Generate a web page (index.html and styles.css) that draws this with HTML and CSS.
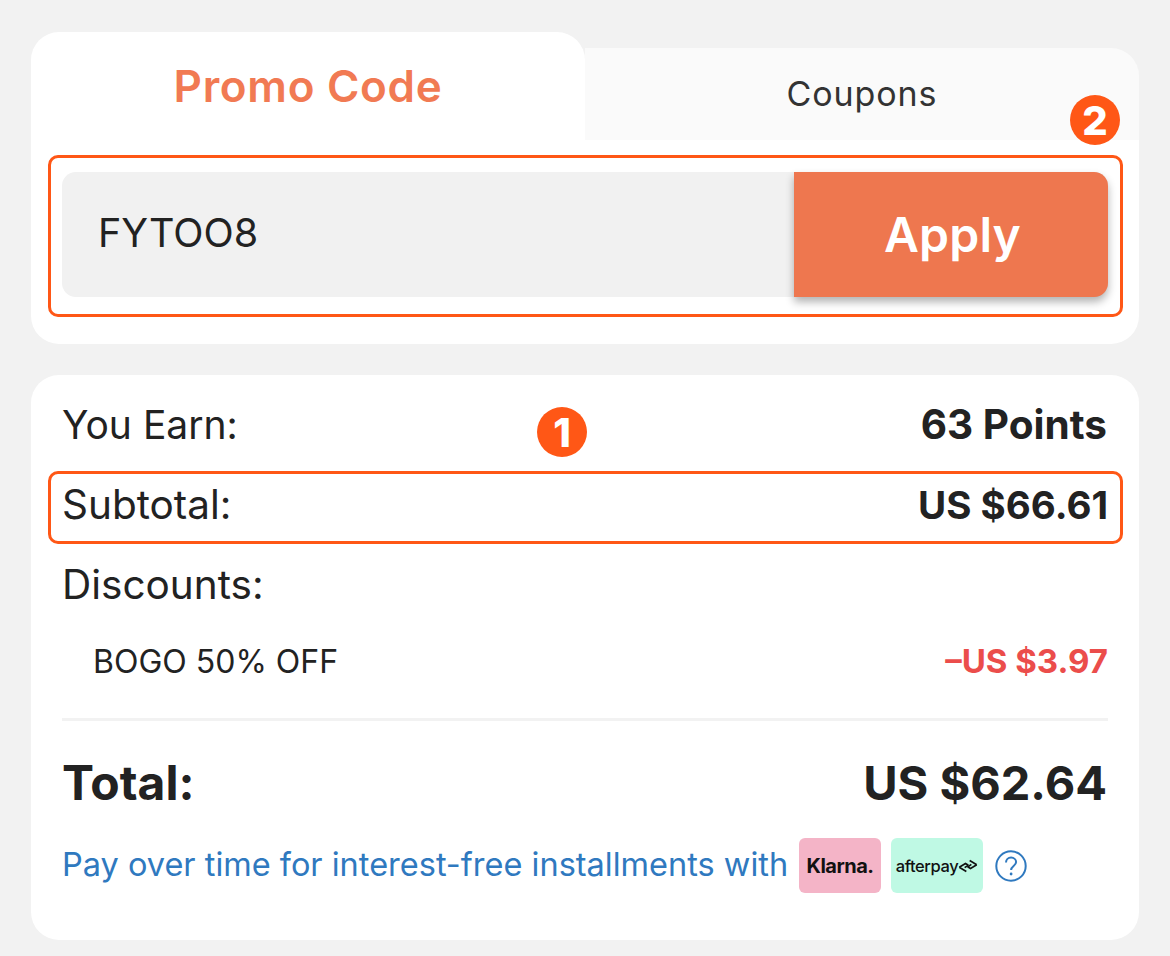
FILE: index.html
```html
<!DOCTYPE html>
<html lang="en">
<head>
<meta charset="utf-8">
<title>Checkout summary</title>
<link rel="stylesheet" href="styles.css">
</head>
<body>
<main class="page">
  <section class="card promo">
    <div class="tabs">
      <div class="tab tab-active">Promo Code</div>
      <div class="tab tab-idle">Coupons</div>
    </div>
    <span class="badge badge-two">2</span>
    <div class="promo-body">
      <div class="outline outline-promo">
        <div class="code-field">
          <span class="code-value">FYTOO8</span>
          <button class="apply" type="button">Apply</button>
        </div>
      </div>
    </div>
  </section>
  <section class="card summary">
    <span class="badge badge-one">1</span>
    <div class="row row-earn"><span>You Earn:</span><strong class="points">63 Points</strong></div>
    <div class="outline outline-sub">
      <div class="row row-sub"><span>Subtotal:</span><strong>US $66.61</strong></div>
    </div>
    <div class="row row-disc"><span>Discounts:</span></div>
    <div class="row row-bogo"><span>BOGO 50% OFF</span><strong class="minus">–US $3.97</strong></div>
    <div class="divider"></div>
    <div class="row row-total"><strong class="total-label">Total:</strong><strong>US $62.64</strong></div>
    <div class="pay">
      <span class="pay-text">Pay over time for interest-free installments with</span>
      <span class="logo logo-klarna">Klarna.</span>
      <span class="logo logo-afterpay">afterpay<svg class="ap-mark" viewBox="0 0 24 16" aria-hidden="true"><path d="M1.500 9.500 9 5l3.500 2M22.500 6.500 15 11l-3.500-2M14 1.500l8.500 5M10 14.500l-8.500-5M8 10l4.500-3M12 9l4-3" fill="none" stroke="#111" stroke-width="2"/></svg></span>
      <svg class="help" viewBox="0 0 32 32" aria-hidden="true"><circle cx="16" cy="16" r="14.700" fill="none" stroke="#2f79bf" stroke-width="2"/><path d="M11 12.600c0-3 2.200-5 5.100-5 2.800 0 5 1.900 5 4.500 0 3.900-5 4-5 7.900" fill="none" stroke="#2f79bf" stroke-width="2"/><circle cx="16.100" cy="24" r="1.400" fill="#2f79bf"/></svg>
    </div>
  </section>
</main>
</body>
</html>
```
FILE: styles.css
```css
* { box-sizing: border-box; }
html, body { margin: 0; height: 100%; }
body {
  background: #f2f2f2;
  font-family: "Inter", "Open Sans", sans-serif;
  color: #222;
  overflow: hidden;
}
.page {
  padding: 32px 31px 0;
  display: flex;
  flex-direction: column;
  gap: 31px;
}
.card {
  position: relative;
  background: #fff;
  border-radius: 28px;
}
.promo {
  height: 312px;
  background: transparent;
  display: flex;
  flex-direction: column;
}
.tabs { display: flex; height: 108px; align-items: flex-end; }
.tab { width: 554px; display: flex; justify-content: center; align-items: center; }
.tab-active {
  height: 108px;
  background: #fff;
  border-radius: 28px 28px 0 0;
  color: #f17a53;
  font-size: 44px;
  font-weight: 600;
  letter-spacing: 0.7px;
}
.tab-idle {
  height: 92px;
  background: #fafafa;
  border-radius: 0 28px 0 0;
  color: #333;
  font-size: 34px;
  letter-spacing: 0.9px;
  padding: 0 0 2px;
}
.promo-body {
  flex: 1;
  background: #fff;
  border-radius: 0 0 28px 28px;
  padding: 15px 16px 0 17px;
}
.outline {
  border: 3px solid #ff5716;
  border-radius: 10px;
}
.outline-promo { height: 162px; padding: 14px 12px 17px 11px; }
.code-field {
  height: 125px;
  display: flex;
  justify-content: space-between;
  align-items: stretch;
  background: #f1f1f1;
  border-radius: 14px;
}
.code-value {
  font-size: 39.500px;
  padding-left: 36px;
  align-self: center;
  padding-bottom: 4px;
}
.apply {
  width: 314px;
  border: 0;
  border-radius: 0 14px 14px 0;
  background: #ee774f;
  color: #fff;
  font: 600 48px "Inter", sans-serif;
  letter-spacing: 0.2px;
  padding: 0 0 0 3px;
  box-shadow: 0 5px 8px rgba(0, 0, 0, 0.3);
}
.summary { height: 565px; padding: 16px 31px 0; }
.row {
  display: flex;
  justify-content: space-between;
  align-items: center;
  font-size: 39px;
}
.row strong { font-weight: 700; font-size: 38.500px; }
.row-earn { height: 66px; }
.row strong.points { font-size: 40.500px; padding-right: 1px; }
.outline-sub { height: 73px; margin: 14px -15px 0 -14px; padding: 0 12px 0 11px; }
.row-sub { height: 61px; font-size: 40.500px; }
.row-disc { height: 68px; margin-top: 6px; font-size: 40.500px; }
.row-bogo { height: 76px; font-size: 32px; padding-left: 31px; margin-top: 5px; }
.row strong.minus { color: #eb4d4b; font-size: 33px; }
.divider { height: 3px; background: #f2f2f2; margin-top: 19px; }
.row-total { height: 64px; font-size: 47px; margin-top: 29px; }
.row-total strong { font-size: 47px; padding-right: 1px; }
.row-total strong.total-label { font-size: 48px; }
.pay {
  display: flex;
  align-items: center;
  margin-top: 24px;
  height: 55px;
  color: #2f79bf;
  font-size: 32.500px;
}
.pay-text { width: 737px; white-space: nowrap; padding-bottom: 2px; }
.logo {
  height: 55px;
  border-radius: 6px;
  display: flex;
  align-items: center;
  justify-content: center;
  color: #111;
}
.logo-klarna {
  width: 82px;
  background: #f4b4c7;
  font-size: 20px;
  font-weight: 700;
  letter-spacing: -0.5px;
}
.logo-afterpay {
  width: 92px;
  margin-left: 10px;
  background: #bff9e4;
  font-size: 16.500px;
  font-weight: 500;
  letter-spacing: -0.4px;
}
.ap-mark { width: 20px; height: 14px; flex: none; }
.help { width: 32px; height: 32px; margin-left: 12px; }
.badge {
  position: absolute;
  width: 50px;
  height: 50px;
  border-radius: 50%;
  background: #ff5716;
  color: #fff;
  font-size: 40px;
  font-weight: 800;
  display: flex;
  align-items: center;
  justify-content: center;
  z-index: 1;
}
.badge-two { left: 1039px; top: 63px; }
.badge-one { left: 506px; top: 32px; }
```
